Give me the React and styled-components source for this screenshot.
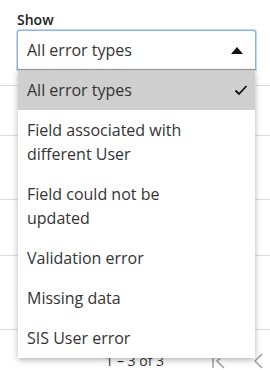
import React from "react";
import styled, { createGlobalStyle } from "styled-components";

const Global = createGlobalStyle`
  html, body { margin: 0; padding: 0; background: #fff; }
  body { font-family: "Open Sans", "Noto Sans", sans-serif; color: #333; }
`;

const Page = styled.div`
  position: relative;
  width: 270px;
  height: 370px;
  overflow: hidden;
  background: #fff;
`;

const Field = styled.div`
  padding: 11px 14px 0 17px;
`;

const Label = styled.div`
  font-size: 14px;
  font-weight: 600;
  line-height: 18px;
  color: #222;
  margin-bottom: 1px;
`;

const SelectBox = styled.div`
  box-sizing: border-box;
  height: 40px;
  display: flex;
  align-items: center;
  justify-content: space-between;
  padding: 0 12px 0 9px;
  border: 1px solid #8fb3e6;
  border-bottom-color: #9a9a9a;
  box-shadow: 0 0 0 1px rgba(140, 180, 235, 0.55);
  border-radius: 3px 3px 0 0;
  font-size: 16px;
  color: #333;
  background: #fff;
`;

const Caret = styled.span`
  width: 0;
  height: 0;
  border-left: 6px solid transparent;
  border-right: 6px solid transparent;
  border-bottom: 7px solid #111;
`;

const Table = styled.div`
  display: flex;
  flex-direction: column;
`;

const Row = styled.div`
  height: ${(p) => p.$h}px;
  border-bottom: 1px solid #ddd;
  box-sizing: border-box;
`;

const Pager = styled.div`
  display: flex;
  align-items: center;
  justify-content: flex-end;
  gap: 22px;
  padding: 21px 2px 0 0;
  height: 20px;
  font-size: 14px;
  line-height: 18px;
  color: #333;
`;

const PagerText = styled.span`
  margin-right: 24px;
`;

const Menu = styled.ul`
  position: absolute;
  top: 70px;
  left: 18px;
  width: 237px;
  margin: 0;
  padding: 0;
  list-style: none;
  background: #fff;
  box-shadow: 0 2px 6px rgba(0, 0, 0, 0.3);
`;

const Item = styled.li`
  display: flex;
  align-items: flex-start;
  justify-content: space-between;
  padding: 8px 7px 8px 9px;
  font-size: 16px;
  line-height: 24px;
  color: #333;
  background: ${(p) => (p.$selected ? "#cfcfcf" : "#fff")};
`;

const ItemText = styled.span`
  max-width: 186px;
`;

const Check = styled.svg`
  width: 14px;
  height: 14px;
  margin-top: 5px;
  flex: none;
`;

const Icon = styled.svg`
  width: 18px;
  height: 18px;
  flex: none;
`;

const options = [
  "All error types",
  "Field associated with different User",
  "Field could not be updated",
  "Validation error",
  "Missing data",
  "SIS User error",
];

export default function App() {
  return (
    <>
      <Global />
      <Page>
        <Field>
          <Label>Show</Label>
          <SelectBox>
            <span>All error types</span>
            <Caret />
          </SelectBox>
        </Field>
        <Table>
          <Row $h={16} />
          <Row $h={50} />
          <Row $h={64} />
          <Row $h={56} />
          <Row $h={74} />
          <Pager>
            <PagerText>1 – 3 of 3</PagerText>
            <Icon viewBox="0 0 18 18" fill="none" stroke="#a0a0a0" strokeWidth="1.5">
              <path d="M3 2v14M14 2L7 9l7 7" />
            </Icon>
            <Icon viewBox="0 0 18 18" fill="none" stroke="#a0a0a0" strokeWidth="1.5">
              <path d="M12 2L5 9l7 7" />
            </Icon>
          </Pager>
        </Table>
        <Menu>
          {options.map((o, i) => (
            <Item key={o} $selected={i === 0}>
              <ItemText>{o}</ItemText>
              {i === 0 && (
                <Check viewBox="0 0 14 14" fill="none" stroke="#111" strokeWidth="1.8">
                  <path d="M1.5 7.5l3.5 3.5L12.5 3" />
                </Check>
              )}
            </Item>
          ))}
        </Menu>
      </Page>
    </>
  );
}
